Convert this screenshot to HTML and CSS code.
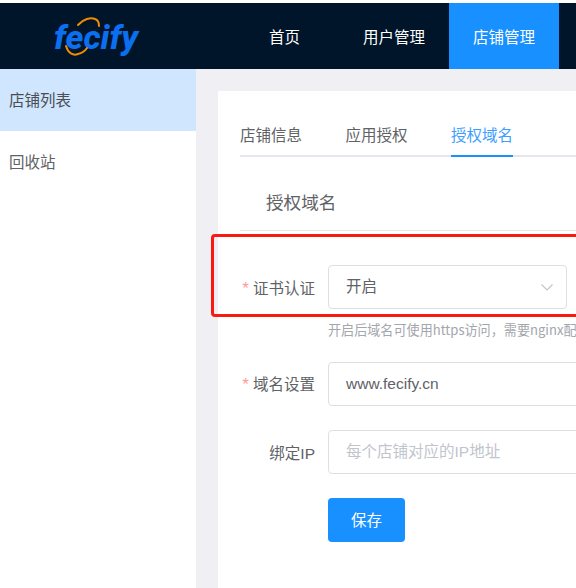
FILE: index.html
```html
<!DOCTYPE html>
<html lang="zh-CN">
<head>
<meta charset="UTF-8" />
<meta name="viewport" content="width=device-width, initial-scale=1.0" />
<title>fecify</title>
<link rel="stylesheet" href="styles.css">
</head>
<body>
<div class="header">
    <div class="logo">
        <span class="logo-text">fecify</span>
        <svg class="logo-arcs" width="110" height="50" viewBox="0 0 110 50" fill="none" stroke="#f08c00" stroke-width="2" stroke-linecap="round">
            <path d="M38 15C43 9 51 7 55 9C58 10 59 13 59 16" />
            <path d="M26 36C28 43 33 46 38 44C42 43 45 41 47 38" />
        </svg>
    </div>
    <div class="nav">
        <a class="nav-item nav-home">首页</a>
        <a class="nav-item">用户管理</a>
        <a class="nav-item active">店铺管理</a>
    </div>
</div>

<div class="main">
    <div class="sidebar">
        <div class="side-item active">店铺列表</div>
        <div class="side-item">回收站</div>
    </div>
    <div class="content">
        <div class="card">
            <div class="tabs">
                <div class="tab">店铺信息</div>
                <div class="tab">应用授权</div>
                <div class="tab active">授权域名</div>
            </div>
            <div class="section-title">授权域名</div>

            <div class="form">
                <div class="form-row row-select">
                    <label class="form-label"><span class="star">*</span>证书认证</label>
                    <div class="select">
                        <span class="select-value">开启</span>
                        <svg width="14" height="14" viewBox="0 0 14 14" fill="none" stroke="#c0c4cc" stroke-width="1.1"><path d="M1.5 4.5L7 10L12.5 4.5" /></svg>
                    </div>
                </div>
                <div class="form-hint">开启后域名可使用https访问，需要nginx配</div>
                <div class="form-row">
                    <label class="form-label"><span class="star">*</span>域名设置</label>
                    <input class="input" type="text" value="www.fecify.cn" />
                </div>
                <div class="form-row">
                    <label class="form-label">绑定IP</label>
                    <input class="input" type="text" placeholder="每个店铺对应的IP地址" />
                </div>
                <div class="form-row">
                    <button class="btn-save">保存</button>
                </div>
            </div>
        </div>
    </div>
</div>

<!-- 标注框 -->
<div class="highlight"></div>
</body>
</html>
```

FILE: styles.css
```css
* {
    box-sizing: border-box;
    margin: 0;
    padding: 0;
    font-family: "Liberation Sans", "Noto Sans CJK SC", sans-serif;
}
html, body {
    width: 576px;
    height: 588px;
    overflow: hidden;
    background: #fff;
}
body {
    position: relative;
    padding-top: 3px;
    color: #606266;
    font-size: 15.5px;
}
.header {
    height: 66px;
    background: #001529;
    display: flex;
}
.logo {
    position: relative;
    width: 245px;
    flex-shrink: 0;
}
.logo-text {
    position: absolute;
    left: 54px;
    top: 12px;
    font-family: "Roboto", sans-serif;
    font-size: 34px;
    line-height: 44px;
    font-weight: 800;
    font-style: italic;
    color: #0b6ff0;
}
.logo-arcs {
    position: absolute;
    left: 40px;
    top: 7px;
}
.nav {
    display: flex;
}
.nav-item {
    display: flex;
    align-items: center;
    padding: 0 24px;
    color: #fff;
}
.nav-home {
    margin-right: 15px;
}
.nav-item.active {
    background: #1890ff;
}
.main {
    display: flex;
    height: 519px;
}
.sidebar {
    width: 196px;
    flex-shrink: 0;
    background: #fff;
}
.side-item {
    height: 62px;
    line-height: 64px;
    padding-left: 9px;
}
.side-item.active {
    background: #cfe6fe;
    color: #4a4d52;
}
.content {
    flex: 1;
    min-width: 0;
    background: #f0eff4;
    padding: 22px 0 0 22px;
}
.card {
    background: #fff;
    height: 100%;
    padding: 28px 0 0 22px;
    overflow: hidden;
}
.tabs {
    display: flex;
    gap: 43.5px;
    height: 38px;
    border-bottom: 2px solid #e4e7ed;
}
.tab {
    height: 38px;
    line-height: 33px;
}
.tab.active {
    color: #409eff;
    border-bottom: 2px solid #1890ff;
}
.section-title {
    margin-top: 18px;
    height: 56px;
    line-height: 56px;
    padding-left: 26px;
    font-size: 17.6px;
    border-bottom: 1px solid #e8e8e8;
}
.form {
    padding-top: 34px;
}
.form-row {
    display: flex;
    align-items: center;
    gap: 13px;
    margin-bottom: 24.5px;
    padding-left: 88px;
}
.form-row:has(.form-label) {
    padding-left: 0;
}
.row-select {
    margin-bottom: 0;
}
.form-label {
    width: 75px;
    text-align: right;
    white-space: nowrap;
    flex-shrink: 0;
}
.star {
    color: #f99;
    margin-right: 4px;
    font-size: 17px;
}
.select {
    width: 239px;
    height: 44px;
    border: 1px solid #dcdfe6;
    border-radius: 4px;
    padding: 0 12px 0 17px;
    display: flex;
    align-items: center;
    justify-content: space-between;
}
.select-value {
    line-height: 20px;
    margin-top: 1px;
    margin-bottom: 2px;
}
.input {
    width: 300px;
    height: 43.5px;
    flex-shrink: 0;
    border: 1px solid #dcdfe6;
    border-radius: 4px;
    padding: 0 17px;
    font-size: 15.5px;
    color: #606266;
    outline: none;
}
.input::placeholder {
    color: #c0c4cc;
}
.form-hint {
    margin: 11px 0 22px 88px;
    height: 20px;
    line-height: 20px;
    font-family: "Noto Sans CJK SC", sans-serif;
    font-size: 13.1px;
    color: #a3a6ad;
    white-space: nowrap;
}
.btn-save {
    width: 77px;
    height: 44px;
    border: none;
    border-radius: 4px;
    padding-bottom: 2px;
    background: #1890ff;
    color: #fff;
    font-size: 15.5px;
}
.highlight {
    position: absolute;
    left: 211px;
    top: 234px;
    width: 400px;
    height: 83px;
    border: 3px solid #fb1a10;
    border-radius: 4px;
}
```
